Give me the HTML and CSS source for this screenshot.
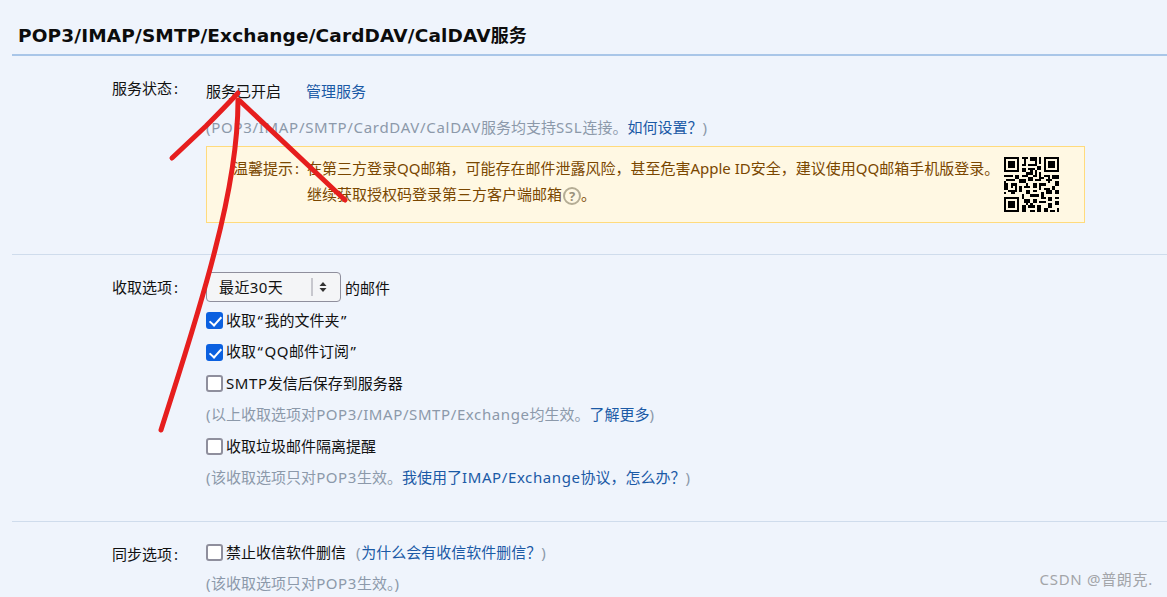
FILE: index.html
```html
<!DOCTYPE html>
<html lang="zh-CN">
<head>
<meta charset="utf-8">
<title>POP3/IMAP/SMTP/Exchange/CardDAV/CalDAV服务</title>
<link rel="stylesheet" href="styles.css">
</head>
<body>
<main class="page">
  <h1 class="title"><span class="title-latin">POP3/IMAP/SMTP/Exchange/CardDAV/CalDAV</span>服务</h1>

  <section class="section section-status">
    <div class="label">服务状态<span class="colon">:</span></div>
    <div class="content">
      <div class="line status-line"><span>服务已开启</span><a class="link manage" href="#">管理服务</a></div>
      <div class="line hint status-hint"><span><span class="w">(POP3/IMAP/SMTP/CardDAV/CalDAV</span>服务均支持<span class="w">SSL</span>连接。<a class="link" href="#">如何设置？</a>)</span></div>
      <div class="tip">
        <div class="tip-label">温馨提示<span class="colon">:</span></div>
        <div class="tip-text">
          <div>在第三方登录QQ邮箱，可能存在邮件泄露风险，甚至危害Apple ID安全，建议使用QQ邮箱手机版登录。</div>
          <div>继续获取授权码登录第三方客户端邮箱<span class="help">?</span>。</div>
        </div>
        <svg class="qr" viewBox="0 0 25 25" shape-rendering="crispEdges" aria-label="二维码">
          <path fill="#000" d="M0 0h7v7h-7zM1 1v5h5v-5zM2 2h3v3h-3z M18 0h7v7h-7zM19 1v5h5v-5zM20 2h3v3h-3z M0 18h7v7h-7zM1 19v5h5v-5zM2 20h3v3h-3z" fill-rule="evenodd"/>
          <path fill="#000" d="M8 0h3v1h-3zM12 0h3v2h-3zM16 0h1v3h-1zM9 1h1v3h-1zM8 3h1v1h-1zM11 3h4v1h-4zM14 2h1v2h-1zM15 4h2v2h-2zM8 5h2v2h-2zM11 5h3v1h-3zM12 6h1v2h-1zM10 7h2v1h-2zM14 6h1v2h-1zM16 7h1v2h-1z
          M0 8h4v1h-4zM5 8h2v2h-2zM8 8h3v1h-3zM13 8h2v1h-2zM18 8h3v1h-3zM22 8h3v2h-3zM1 10h4v1h-4zM7 10h3v2h-3zM11 9h2v2h-2zM14 10h3v1h-3zM16 9h2v1h-2zM19 10h3v1h-3zM20 9h1v3h-1zM23 11h2v2h-2zM0 11h1v1h-1z
          M0 12h2v3h-2zM3 12h3v1h-3zM5 13h1v3h-1zM2 15h3v1h-3zM7 13h1v3h-1zM9 13h3v1h-3zM10 12h1v1h-1zM13 12h2v2h-2zM16 12h3v1h-3zM16 13h1v2h-1zM18 14h3v1h-3zM22 13h1v2h-1zM23 15h2v2h-2zM10 15h2v2h-2zM13 15h2v1h-2zM19 15h3v2h-3zM3 13h1v1h-1z
          M0 16h1v1h-1zM3 16h2v1h-2zM8 17h1v2h-1zM12 17h4v1h-4zM17 16h1v3h-1zM20 18h2v2h-2zM23 18h2v1h-2zM9 19h3v2h-3zM13 19h2v2h-2zM16 20h3v1h-3zM23 20h2v2h-2zM20 21h2v2h-2zM8 22h2v3h-2zM11 22h3v1h-3zM15 22h2v3h-2zM18 23h2v2h-2zM12 24h2v1h-2zM21 24h2v1h-2zM24 23h1v2h-1zM18 18h1v1h-1zM12 21h1v1h-1zM10 21h1v1h-1z"/>
        </svg>
      </div>
    </div>
  </section>

  <section class="section section-fetch">
    <div class="label">收取选项<span class="colon">:</span></div>
    <div class="content">
      <div class="select-line">
        <div class="select-wrap">
          <select class="select"><option>最近30天</option></select>
          <svg class="select-arrows" viewBox="0 0 20 28"><path d="M1 0v18" stroke="#9a9aa5" fill="none"/><path d="M12 4l3.500 4h-7zM12 14l3.500-4h-7z" fill="#333"/></svg>
        </div>
        <span>的邮件</span>
      </div>
      <label class="line check"><input type="checkbox" checked><span>收取<span class="q">“</span>我的文件夹<span class="q">”</span></span></label>
      <label class="line check"><input type="checkbox" checked><span>收取<span class="q">“</span><span class="w">QQ</span>邮件订阅<span class="q">”</span></span></label>
      <label class="line check"><input type="checkbox"><span><span class="w">SMTP</span>发信后保存到服务器</span></label>
      <div class="line hint"><span><span class="w">(</span>以上收取选项对<span class="w">POP3/IMAP/SMTP/Exchange</span>均生效。<a class="link" href="#">了解更多</a>)</span></div>
      <label class="line check"><input type="checkbox"><span>收取垃圾邮件隔离提醒</span></label>
      <div class="line hint"><span><span class="w">(</span>该收取选项只对<span class="w">POP3</span>生效。<a class="link" href="#">我使用了<span class="w">IMAP/Exchange</span>协议，怎么办？</a>)</span></div>
    </div>
  </section>

  <section class="section section-sync">
    <div class="label">同步选项<span class="colon">:</span></div>
    <div class="content">
      <label class="line check"><input type="checkbox"><span>禁止收信软件删信</span><span class="hint why"><span class="w">(</span><a class="link" href="#">为什么会有收信软件删信？</a>)</span></label>
      <div class="line hint"><span><span class="w">(</span>该收取选项只对<span class="w">POP3</span>生效。)</span></div>
    </div>
  </section>
</main>

<svg class="marks" viewBox="0 0 1167 597" aria-hidden="true">
  <path d="M172 158L206 126Q224 108 238 93"/>
  <path d="M240 101L345 200"/>
  <path d="M238 100C238 150 228 200 215 250C200 310 180 370 161 430"/>
</svg>

<div class="watermark">CSDN @普朗克.</div>
</body>
</html>
```
FILE: styles.css
```css
* { box-sizing: border-box; }
html, body { margin: 0; height: 597px; overflow: hidden; }
body {
  position: relative;
  background: #eff4fc;
  color: #111;
  font-family: "Noto Sans", "Noto Sans CJK SC", sans-serif;
  font-size: 15px;
}
.page { padding-left: 12px; }
.title {
  margin: 0;
  height: 56px;
  padding: 20px 0 0 6px;
  font-size: 18px;
  line-height: 30px;
  font-weight: 700;
  color: #0c0c0c;
  border-bottom: 2px solid #a9c6e8;
  white-space: nowrap;
}
.title-latin { font-family: "DejaVu Sans", sans-serif; font-size: 18.5px; letter-spacing: .15px; }
.w { letter-spacing: .6px; }
.status-hint .w { letter-spacing: .7px; }
.q { margin: 0 1.5px; }
.colon { margin-left: 2px; }
.section {
  display: grid;
  grid-template-columns: 100px minmax(0, 1fr);
  border-bottom: 1px solid #cfdcec;
  padding-right: 82px;
}
.section-status { height: 199px; padding-top: 20px; }
.section-fetch { height: 267px; padding-top: 17px; }
.section-sync { border-bottom: 0; padding-top: 15px; }
.label {
  margin-left: 100px;
  width: 90px;
  grid-column: 1;
  line-height: 25px;
  white-space: nowrap;
}
.section-fetch .label { line-height: 30px; }
.section-sync .label { padding-top: 5px; }
.content { grid-column: 2; margin-left: 94px; min-width: 0; }
.line { display: flex; align-items: center; min-height: 31.4px; line-height: 31.4px; white-space: nowrap; }
.status-line { min-height: 30px; line-height: 30px; }
.status-hint { margin-top: 6px; min-height: 30px; line-height: 30px; }
.hint { color: #8c99aa; }
.link { color: #1b5aa6; text-decoration: none; }
.manage { margin-left: 25px; }
.tip {
  display: flex;
  width: 879px;
  height: 77px;
  margin-top: 4px;
  padding: 9px 25px 0 26px;
  background: #fff8e3;
  border: 1px solid #ffdb7d;
  color: #7a4700;
  line-height: 25.5px;
}
.tip-label { width: 74px; flex: none; white-space: nowrap; }
.tip-text { flex: 1; white-space: nowrap; min-width: 0; }
.help {
  display: inline-block;
  width: 18px;
  height: 18px;
  margin-left: 1px;
  border: 2px solid #b5ad95;
  border-radius: 50%;
  color: #9a917a;
  font-size: 13px;
  font-weight: 700;
  line-height: 14px;
  text-align: center;
  vertical-align: -1px;
}
.qr { flex: none; width: 55px; height: 55px; margin-top: 1px; }
.select-line { display: flex; align-items: center; gap: 4px; height: 30px; margin-bottom: 3px; }
.select-wrap { position: relative; width: 135px; height: 30px; }
.select {
  appearance: none;
  width: 100%;
  height: 100%;
  padding: 0 0 0 12px;
  border: 1px solid #8f8f9d;
  border-radius: 4px;
  background: #f4f5f7;
  color: #111;
  font: inherit;
  letter-spacing: .4px;
}
.select-arrows { position: absolute; top: 6px; left: 105px; width: 20px; height: 28px; pointer-events: none; }
.check input {
  appearance: none;
  position: relative;
  flex: none;
  width: 17px;
  height: 17px;
  margin: 0 3px 0 0;
  background: #fff;
  border: 2px solid #8f8f9d;
  border-radius: 3px;
}
.check input:checked { background: #0b60e0; border-color: #0b60e0; }
.check input:checked::after {
  content: "";
  position: absolute;
  left: 4px;
  top: 0;
  width: 5px;
  height: 10px;
  border: solid #fff;
  border-width: 0 2px 2px 0;
  transform: rotate(42deg);
}
.why { margin-left: 10px; }
.marks {
  position: absolute;
  inset: 0;
  width: 1167px;
  height: 597px;
  pointer-events: none;
}
.marks path { fill: none; stroke: #e61e1e; stroke-width: 5; stroke-linecap: round; stroke-linejoin: round; }
.watermark {
  position: absolute;
  right: 14px;
  bottom: 8px;
  color: #a3a5a9;
  font-size: 15px;
  line-height: 20px;
  letter-spacing: .7px;
}
```
